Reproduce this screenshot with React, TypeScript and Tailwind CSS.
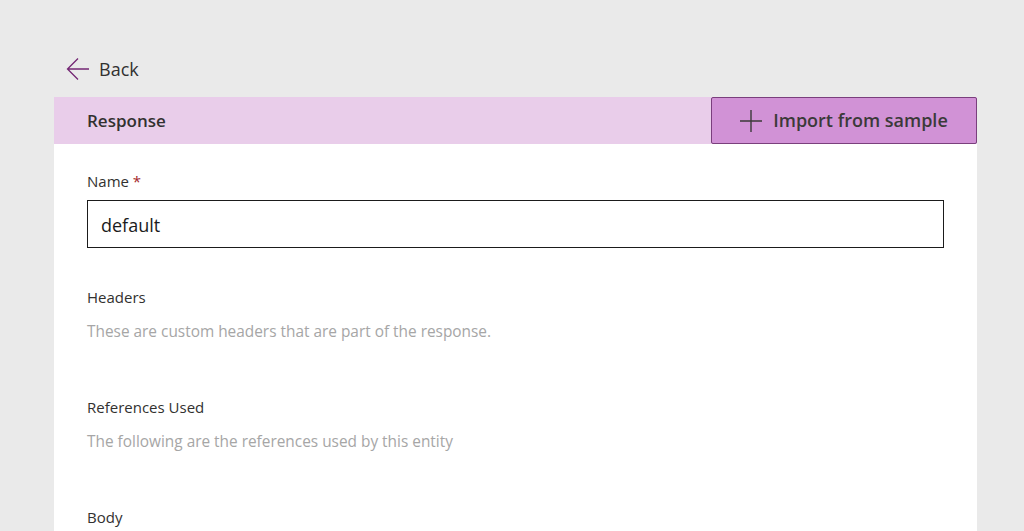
import React from "react";

const font = { fontFamily: '"Open Sans", "Noto Sans", sans-serif' };

const BackArrow = () => (
  <svg width="24" height="24" viewBox="0 0 24 24" fill="none" stroke="#742774" strokeWidth="1.3">
    <path d="M23 12H1.5M12 1.5L1.5 12L12 22.5" />
  </svg>
);

const PlusIcon = () => (
  <svg width="22" height="22" viewBox="0 0 22 22" fill="none" stroke="#3b3a39" strokeWidth="1.4">
    <path d="M11 0V22M0 11H22" />
  </svg>
);

const Section = ({ title, desc }: { title: string; desc: string }) => (
  <div className="flex flex-col">
    <div className="text-[15px] leading-[20px] text-[#323130]">{title}</div>
    <div className="mt-[15px] text-[15.4px] leading-[20px] text-[#a6a6a6]">{desc}</div>
  </div>
);

const App = () => {
  return (
    <div className="h-[531px] w-full overflow-hidden bg-[#eaeaea]" style={font}>
      <div className="pl-[54px] pr-[47px]">
        <div className="flex h-[97px] items-end pl-[12px] pb-[16px]">
          <button className="flex items-center gap-[9px]">
            <BackArrow />
            <span className="text-[18px] leading-[24px] text-[#323130]">Back</span>
          </button>
        </div>
        <div className="bg-white">
          <div className="flex h-[47px] items-center justify-between bg-[#e9cdea]">
            <span className="pl-[33px] text-[17px] font-semibold text-[#323130]">Response</span>
            <button className="flex h-[47px] w-[266px] items-center justify-center gap-[11px] rounded-[2px] border border-[#7a3f7d] bg-[#d192d6]">
              <PlusIcon />
              <span className="text-[18px] font-semibold text-[#3b3a39]">Import from sample</span>
            </button>
          </div>
          <div className="px-[33px] pt-[27px] pb-[40px]">
            <div className="text-[15px] leading-[20px] text-[#323130]">
              Name <span className="text-[#a4262c]">*</span>
            </div>
            <div className="mt-[9px] flex h-[48px] items-center border-[1.5px] border-[#1b1b1b] px-[13px] pt-[2px] text-[18px] text-[#1b1b1b]">
              default
            </div>
            <div className="mt-[39px] flex flex-col gap-[55px]">
              <Section title="Headers" desc="These are custom headers that are part of the response." />
              <Section title="References Used" desc="The following are the references used by this entity" />
              <div className="text-[15px] leading-[20px] text-[#323130]">Body</div>
            </div>
          </div>
        </div>
      </div>
    </div>
  );
};

export default App;
